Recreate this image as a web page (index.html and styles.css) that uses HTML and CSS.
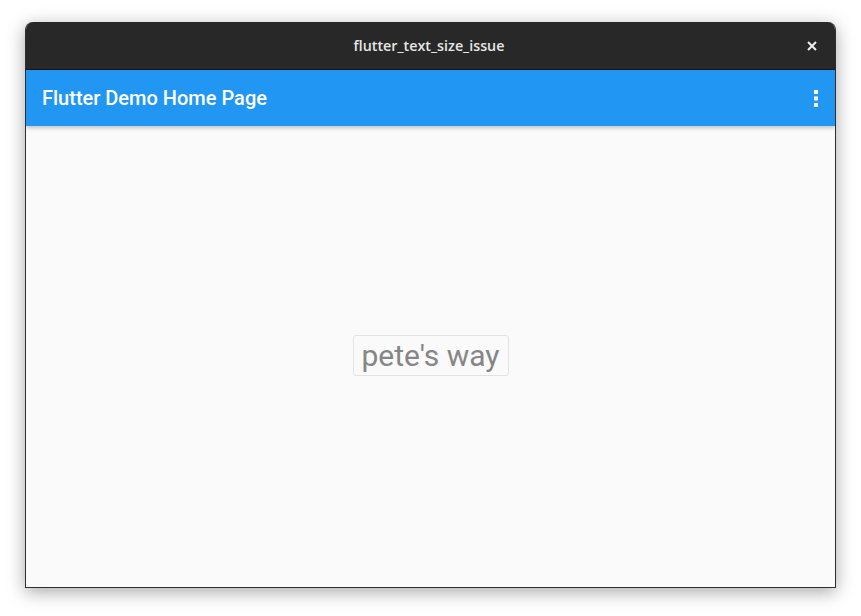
FILE: index.html
```html
<!DOCTYPE html>
<html>
<head>
<meta charset="utf-8">
<link rel="stylesheet" href="styles.css">
</head>
<body>
<div class="window">
  <div class="titlebar">
    <span class="title">flutter_text_size_issue</span>
    <svg class="close" width="10" height="10" viewBox="0 0 10 10"><path d="M1 1L9 9M9 1L1 9" stroke="#eeeeee" stroke-width="2"/></svg>
  </div>
  <div class="appbar">
    <span class="apptitle">Flutter Demo Home Page</span>
    <svg class="menu" width="4" height="17" viewBox="0 0 4 17"><rect x="0" y="0" width="4" height="4" fill="#fff"/><rect x="0" y="6.5" width="4" height="4" fill="#fff"/><rect x="0" y="13" width="4" height="4" fill="#fff"/></svg>
  </div>
  <div class="content">
    <div class="chip">pete's way</div>
  </div>
</div>
</body>
</html>
```
FILE: styles.css
```css
html, body { margin: 0; padding: 0; background: #ffffff; }
body { width: 861px; height: 616px; overflow: hidden; }
.window {
  margin: 22px 0 0 25px;
  width: 811px;
  height: 566px;
  box-sizing: border-box;
  border: 1px solid #2e2e2e;
  border-top: none;
  border-radius: 8px 8px 0 0;
  box-shadow: 0 4px 18px rgba(0,0,0,0.35);
  display: flex;
  flex-direction: column;
  overflow: hidden;
  background: #fafafa;
}
.titlebar {
  height: 47px;
  flex: none;
  background: #282828;
  border-bottom: 1px solid #111;
  display: flex;
  align-items: center;
  justify-content: center;
  position: relative;
}
.title {
  font-family: "Open Sans", "DejaVu Sans", sans-serif;
  font-weight: 600;
  font-size: 14.3px;
  color: #e6e6e6;
  margin-left: -3px;
}
.close { position: absolute; right: 18px; top: 19px; }
.appbar {
  height: 56px;
  flex: none;
  background: #2196f3;
  display: flex;
  align-items: center;
  justify-content: space-between;
  padding: 0 17px 0 16px;
  box-shadow: 0 2px 4px rgba(0,0,0,0.22);
  position: relative;
  z-index: 1;
}
.apptitle {
  font-family: Roboto, "Liberation Sans", sans-serif;
  font-weight: 500;
  font-size: 20px;
  color: #ffffff;
}
.content {
  flex: 1;
  display: flex;
  align-items: center;
  justify-content: center;
  padding-bottom: 2px;
}
.chip {
  font-family: Roboto, "Liberation Sans", sans-serif;
  font-size: 30px;
  color: #868686;
  border: 1px solid #e2e2e2;
  border-radius: 3px;
  padding: 1px 8px 1px 7px;
  line-height: 37px;
  margin-left: 1px;
}
```
